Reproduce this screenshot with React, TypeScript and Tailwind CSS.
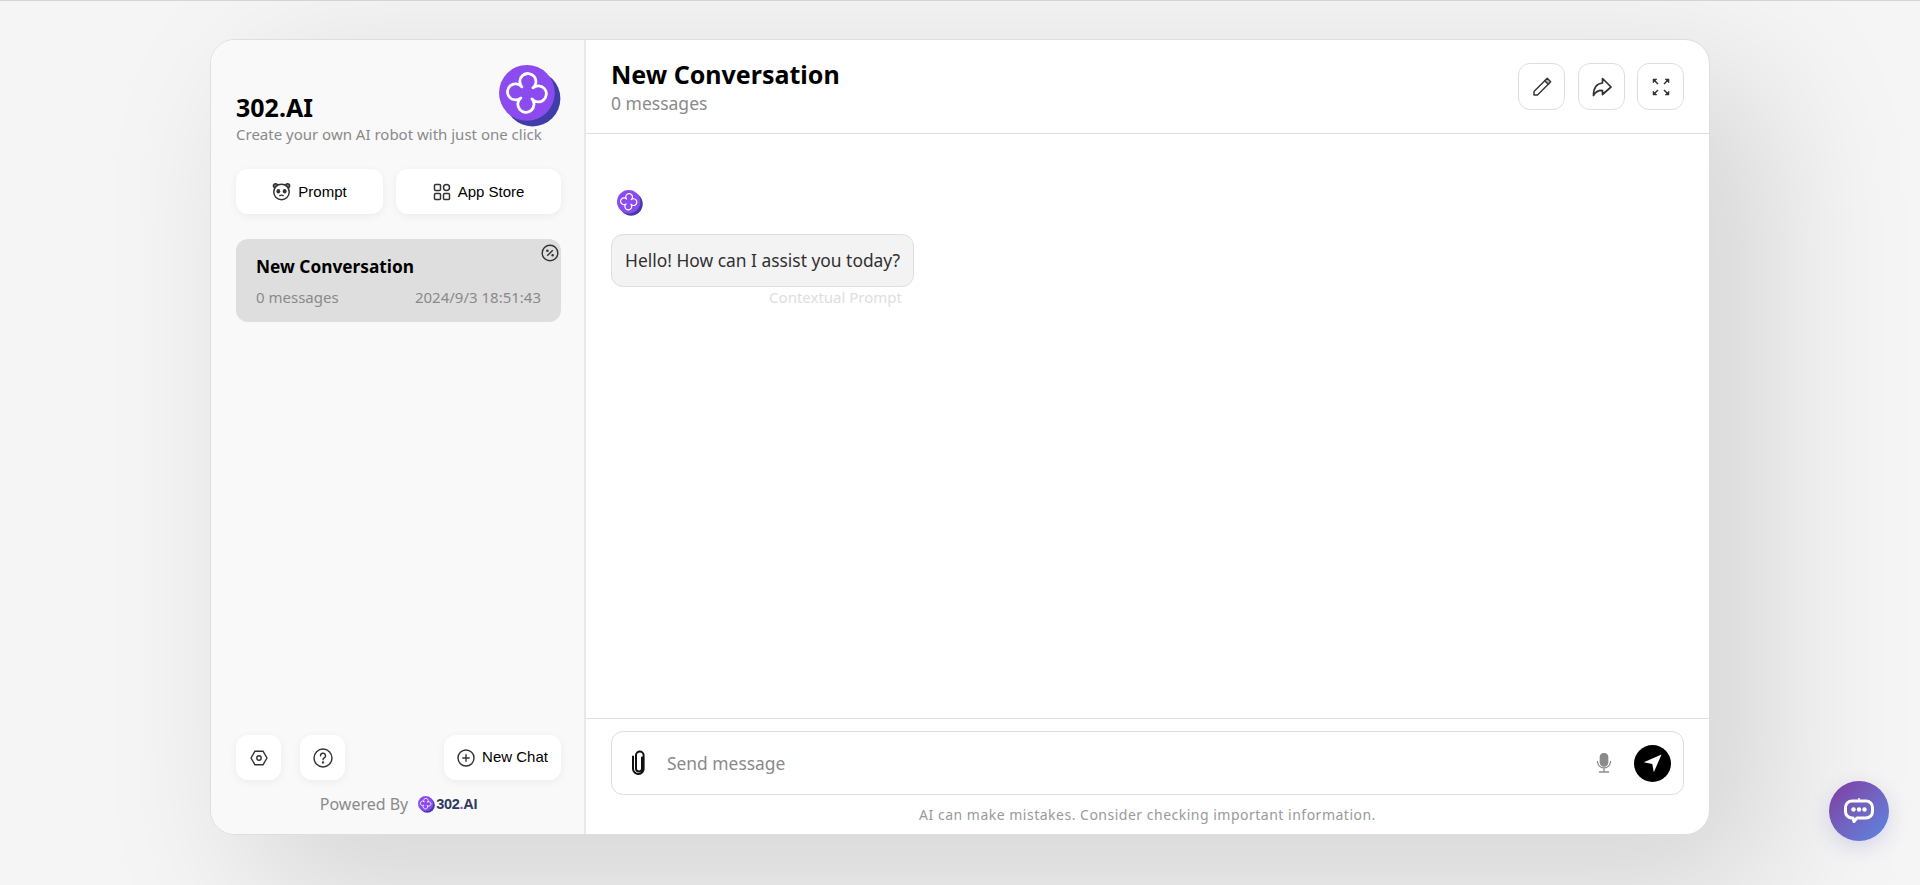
import React from "react";

const noto = "font-['Noto_Sans',sans-serif]";
const arial = "font-['Liberation_Sans',Arial,sans-serif]";

function Logo({ size }: { size: number }) {
  return (
    <svg width={size} height={size} viewBox="0 0 100 100" className="block">
      <circle cx="54" cy="54" r="45" fill="#3f3da8" />
      <circle cx="45" cy="45" r="45" fill="#8c4bee" />
      <path
        transform="translate(-5 -5) rotate(5 50 50)"
        d="M41 41A13 13 0 1 1 59 41A13 13 0 1 1 59 59A13 13 0 1 1 41 59A13 13 0 1 1 41 41Z"
        fill="none"
        stroke="#fff"
        strokeWidth="4.500"
        strokeLinejoin="round"
      />
    </svg>
  );
}

function Panda() {
  return (
    <svg width="19" height="19" viewBox="0 0 18 18" fill="none" stroke="#333" strokeWidth="1.400">
      <circle cx="3.300" cy="3.600" r="2" fill="#777" />
      <circle cx="14.700" cy="3.600" r="2" fill="#777" />
      <circle cx="9" cy="9.500" r="7.300" fill="#fff" />
      <ellipse cx="6" cy="8.700" rx="1.800" ry="2.100" fill="#333" stroke="none" />
      <ellipse cx="12" cy="8.700" rx="1.800" ry="2.100" fill="#333" stroke="none" />
      <path d="M7 13.200c1-.9 3-.9 4 0" />
    </svg>
  );
}

function Grid() {
  return (
    <svg width="18" height="18" viewBox="0 0 18 18" fill="none" stroke="#333" strokeWidth="1.500">
      <rect x="1.500" y="1.500" width="6" height="6" rx="1" />
      <circle cx="13.500" cy="4.500" r="3" />
      <rect x="1.500" y="10.500" width="6" height="6" rx="1" />
      <rect x="10.500" y="10.500" width="6" height="6" rx="1" />
    </svg>
  );
}

function CloseCircle() {
  return (
    <svg width="18" height="18" viewBox="0 0 18 18" fill="none" stroke="#333" strokeWidth="1.400">
      <circle cx="9" cy="9" r="7.800" />
      <path d="M6.200 11.800l5.600-5.600" />
      <circle cx="6.400" cy="6.800" r=".6" fill="#333" />
      <circle cx="11.600" cy="11.200" r=".6" fill="#333" />
    </svg>
  );
}

function Settings() {
  return (
    <svg width="18" height="16" viewBox="0 0 18 16" fill="none" stroke="#333" strokeWidth="1.400" strokeLinejoin="round">
      <path d="M5 1.200h8L17 8l-4 6.800H5L1 8z" />
      <circle cx="9" cy="8" r="2.200" />
    </svg>
  );
}

function Help() {
  return (
    <svg width="20" height="20" viewBox="0 0 20 20" fill="none" stroke="#333" strokeWidth="1.400" strokeLinecap="round">
      <circle cx="10" cy="10" r="9" />
      <path d="M7.500 7.700A2.500 2.500 0 1 1 11 10c-.7.400-1 .8-1 1.800" />
      <circle cx="10" cy="14.400" r=".5" fill="#333" />
    </svg>
  );
}

function PlusCircle() {
  return (
    <svg width="18" height="18" viewBox="0 0 18 18" fill="none" stroke="#333" strokeWidth="1.400" strokeLinecap="round">
      <circle cx="9" cy="9" r="8" />
      <path d="M5.800 9h6.400M9 5.800v6.400" />
    </svg>
  );
}

function Pencil() {
  return (
    <svg width="20" height="20" viewBox="0 0 20 20" fill="none" stroke="#333" strokeWidth="1.400" strokeLinejoin="round">
      <path d="M2 18v-3.500L13 3.500 16.500 7 5.500 18z" />
      <path d="M12.800 3.700L15.200 1.300 18.700 4.800 16.300 7.200z" fill="#bbb" />
    </svg>
  );
}

function Share() {
  return (
    <svg width="20" height="20" viewBox="0 0 20 20" fill="none" stroke="#333" strokeWidth="1.700" strokeLinejoin="round">
      <path d="M10.500 1.500L19 10l-8.500 7.500v-4C6.500 13.200 3.500 15 1.500 18.500 1.500 11 5 6.500 10.500 6z" />
    </svg>
  );
}

function Expand() {
  return (
    <svg width="18" height="18" viewBox="0 0 18 18" fill="#333" stroke="#333" strokeWidth="1.500">
      <path d="M1 1h4L1 5z" strokeWidth=".5" />
      <path d="M2.500 2.500L6 6" />
      <path d="M17 1h-4l4 4z" strokeWidth=".5" />
      <path d="M15.500 2.500L12 6" />
      <path d="M1 17h4l-4-4z" strokeWidth=".5" />
      <path d="M2.500 15.500L6 12" />
      <path d="M17 17h-4l4-4z" strokeWidth=".5" />
      <path d="M15.500 15.500L12 12" />
    </svg>
  );
}

function Clip() {
  return (
    <svg width="18" height="26" viewBox="0 0 18 26" fill="none" stroke="#111" strokeWidth="2" strokeLinecap="round">
      <path d="M12 7.500v11a3 3 0 0 1-6 0V5.300a3.800 3.800 0 0 1 7.600 0v13.400a5 5 0 0 1-5 5.300 5.300 5.300 0 0 1-5.600-5.300V6.500" />
    </svg>
  );
}

function Mic() {
  return (
    <svg width="16" height="20" viewBox="0 0 16 20" fill="none" stroke="#8a8a8a" strokeWidth="1.300" strokeLinecap="round">
      <rect x="4.300" y="0.500" width="7.400" height="12.500" rx="3.700" fill="#8a8a8a" />
      <path d="M1.500 8.500a6.500 6.500 0 0 0 13 0M8 15.500v3M3.500 19h9" />
    </svg>
  );
}

function Send() {
  return (
    <svg width="20" height="20" viewBox="0 0 20 20" fill="#fff">
      <path d="M18.500 1.500L10.800 19.300 9.300 11 .8 9.300z" />
    </svg>
  );
}

function Bot() {
  return (
    <svg width="30" height="26" viewBox="0 0 30 26" fill="none">
      <path d="M15 0v3" stroke="#fff" strokeWidth="1.500" />
      <path
        d="M8 3h14a6.500 6.500 0 0 1 6.500 6.500v4a6.500 6.500 0 0 1-6.500 6.500H13l-3 3.500-1-3.500H8a6.500 6.500 0 0 1-6.500-6.500v-4A6.500 6.500 0 0 1 8 3z"
        stroke="#fff"
        strokeWidth="3"
        strokeLinejoin="round"
      />
      <path d="M0 11.500h3M27 11.500h3" stroke="#fff" strokeWidth="1.500" />
      <circle cx="9.500" cy="11.500" r="2.200" fill="#fff" />
      <circle cx="15" cy="11.500" r="2.200" fill="#fff" />
      <circle cx="20.500" cy="11.500" r="2.200" fill="#fff" />
    </svg>
  );
}

const softBtn =
  "flex items-center justify-center rounded-[12px] bg-white shadow-[0_2px_8px_rgba(0,0,0,0.06)]";
const headBtn =
  "flex h-[47px] w-[47px] items-center justify-center rounded-[12px] border border-[#dedede] bg-white";

export default function App() {
  return (
    <div className={`relative h-[885px] w-[1920px] overflow-hidden border-t border-[#d4d4d4] bg-[#f5f5f5] pt-[38px] ${noto}`}>
      <div className="mx-auto flex h-[796px] w-[1500px] overflow-hidden rounded-[25px] border border-[#dedede] bg-white shadow-[50px_50px_150px_10px_rgba(0,0,0,0.13)]">
        <aside className="flex w-[375px] shrink-0 flex-col border-r-2 border-[#e8e8e8] bg-[#f9f9f9] pl-[25px] pr-[23px]">
          <div className="relative h-[129px] shrink-0">
            <div className="absolute left-0 top-[50px] text-[25px] font-bold leading-[34px] text-black">302.AI</div>
            <div className="absolute left-0 top-[85px] whitespace-nowrap text-[15px] leading-[19px] text-[#8a8a8a]">
              Create your own AI robot with just one click
            </div>
            <div className="absolute right-0 top-[25px]">
              <Logo size={62} />
            </div>
          </div>
          <div className="flex gap-[13px]">
            <div className={`${softBtn} h-[45px] w-[147px] gap-[7px]`}>
              <Panda />
              <span className={`${arial} pt-[1px] text-[15px] text-black`}>Prompt</span>
            </div>
            <div className={`${softBtn} h-[45px] w-[165px] gap-[7px]`}>
              <Grid />
              <span className={`${arial} pt-[1px] text-[15px] text-black`}>App Store</span>
            </div>
          </div>
          <div className="relative mt-[25px] h-[83px] rounded-[12px] bg-[#dedede] px-[20px] pt-[17px]">
            <div className="text-[17.3px] font-bold leading-[22px] text-black">New Conversation</div>
            <div className="mt-[10px] flex justify-between text-[15px] leading-[19px] text-[#8a8a8a]">
              <span>0 messages</span>
              <span>2024/9/3 18:51:43</span>
            </div>
            <div className="absolute right-[2px] top-[5px]">
              <CloseCircle />
            </div>
          </div>
          <div className="flex-1" />
          <div className="flex items-center">
            <div className={`${softBtn} h-[45px] w-[45px]`}>
              <Settings />
            </div>
            <div className={`${softBtn} ml-[19px] h-[45px] w-[45px]`}>
              <Help />
            </div>
            <div className={`${softBtn} ml-auto h-[45px] w-[117px] gap-[7px]`}>
              <PlusCircle />
              <span className={`${arial} text-[15px] text-black`}>New Chat</span>
            </div>
          </div>
          <div className="mb-[20px] mt-[14px] flex items-center justify-center gap-[10px] text-[16px] leading-[20px] text-[#8a8a8a]">
            <span>Powered By</span>
            <span className="flex items-center">
              <Logo size={17} />
              <span className={`${arial} ml-[1px] text-[14.5px] font-bold tracking-[-0.3px] text-[#2d3a5e]`}>
                302<span className="text-[#8c4bee]">.</span>AI
              </span>
            </span>
          </div>
        </aside>

        <main className="flex min-w-0 flex-1 flex-col">
          <header className="flex h-[94px] shrink-0 items-center justify-between border-b border-[#dedede] px-[25px]">
            <div>
              <div className="text-[25px] font-bold leading-[30px] text-black">New Conversation</div>
              <div className="mt-[2px] text-[17.5px] leading-[24px] text-[#8a8a8a]">0 messages</div>
            </div>
            <div className="flex">
              <div className={`${headBtn} mr-[13px]`}>
                <Pencil />
              </div>
              <div className={`${headBtn} mr-[12px]`}>
                <Share />
              </div>
              <div className={headBtn}>
                <Expand />
              </div>
            </div>
          </header>

          <section className="flex-1 px-[25px] pt-[56px]">
            <div className="ml-[6px]">
              <Logo size={26} />
            </div>
            <div className="mt-[18px] inline-block rounded-[12px] border border-[#dedede] bg-[#f3f3f3] py-[13px] pl-[13px] pr-[13px] text-[17.4px] leading-[25px] text-[#303030]">
              Hello! How can I assist you today?
            </div>
            <div className="mt-[1px] w-[291px] text-right text-[15px] leading-[19px] text-[#dedede]">Contextual Prompt</div>
          </section>

          <footer className="shrink-0 border-t border-[#dedede] px-[25px]">
            <div className="mt-[12px] flex h-[64px] items-center rounded-[12px] border border-[#dedede] pl-[18px] pr-[12px]">
              <Clip />
              <span className="ml-[19px] flex-1 text-[17.4px] text-[#8a8a8a]">Send message</span>
              <Mic />
              <div className="ml-[22px] flex h-[37px] w-[37px] items-center justify-center rounded-full bg-black">
                <Send />
              </div>
            </div>
            <div className="mb-[9px] mt-[10px] text-center text-[14px] leading-[20px] tracking-[0.5px] text-[#9a9a9a]">
              AI can make mistakes. Consider checking important information.
            </div>
          </footer>
        </main>
      </div>

      <div className="absolute left-[1829px] top-[780px] flex h-[60px] w-[60px] items-center justify-center rounded-full bg-gradient-to-br from-[#7d3aa0] to-[#5388e2] shadow-[0_6px_20px_rgba(80,80,200,0.18)]">
        <Bot />
      </div>
    </div>
  );
}
